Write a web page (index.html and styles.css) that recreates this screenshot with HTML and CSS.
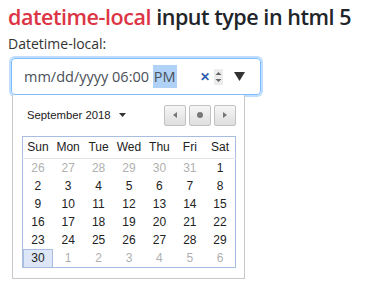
FILE: index.html
```html
<!DOCTYPE html>
<html lang="en">
<head>
    <meta charset="UTF-8">
    <title>datetime-local</title>
    <link rel="stylesheet" href="styles.css">
</head>
<body>

<h1><span class="red">datetime-local</span> input type in html 5</h1>

<label class="lbl">Datetime-local:</label>

<div class="field">
    <div class="input-box">
        <span class="value">mm/dd/yyyy 06:00 <span class="sel">PM</span></span>
        <span class="clear">&#x2715;</span>
        <span class="spin">
            <svg width="7" height="14" viewBox="0 0 7 14"><path d="M0.5 5 L3.5 2 L6.5 5 Z M0.5 9 L3.5 12 L6.5 9 Z" fill="#666"/></svg>
        </span>
        <span class="drop">
            <svg width="11" height="9" viewBox="0 0 11 9"><path d="M0 0 H11 L5.5 9 Z" fill="#333"/></svg>
        </span>
    </div>

    <div class="picker">
        <div class="picker-head">
            <span class="month">September 2018 <svg width="7" height="4" viewBox="0 0 7 4"><path d="M0 0 H7 L3.5 4 Z" fill="#333"/></svg></span>
            <div class="nav">
                <button><svg width="4" height="6" viewBox="0 0 4 6"><path d="M4 0 V6 L0 3 Z" fill="#777"/></svg></button>
                <button><svg width="6" height="6" viewBox="0 0 6 6"><circle cx="3" cy="3" r="3" fill="#777"/></svg></button>
                <button><svg width="4" height="6" viewBox="0 0 4 6"><path d="M0 0 V6 L4 3 Z" fill="#777"/></svg></button>
            </div>
        </div>

        <table class="cal">
            <thead>
                <tr><th>Sun</th><th>Mon</th><th>Tue</th><th>Wed</th><th>Thu</th><th>Fri</th><th>Sat</th></tr>
            </thead>
            <tbody>
                <tr><td class="off">26</td><td class="off">27</td><td class="off">28</td><td class="off">29</td><td class="off">30</td><td class="off">31</td><td>1</td></tr>
                <tr><td>2</td><td>3</td><td>4</td><td>5</td><td>6</td><td>7</td><td>8</td></tr>
                <tr><td>9</td><td>10</td><td>11</td><td>12</td><td>13</td><td>14</td><td>15</td></tr>
                <tr><td>16</td><td>17</td><td>18</td><td>19</td><td>20</td><td>21</td><td>22</td></tr>
                <tr><td>23</td><td>24</td><td>25</td><td>26</td><td>27</td><td>28</td><td>29</td></tr>
                <tr><td class="today">30</td><td class="off">1</td><td class="off">2</td><td class="off">3</td><td class="off">4</td><td class="off">5</td><td class="off">6</td></tr>
            </tbody>
        </table>
    </div>
</div>

</body>
</html>
```

FILE: styles.css
```css
body {
    margin: 0;
    padding: 0 8px;
    background-color: #fff;
    font-family: 'Open Sans', sans-serif;
    color: #212529;
}

h1 {
    margin: 0;
    padding-top: 2px;
    font-size: 21.5px;
    font-weight: 600;
    line-height: 30px;
    letter-spacing: -0.45px;
    white-space: nowrap;
}

.red {
    color: #dc3545;
}

.lbl {
    display: block;
    margin-top: 2px;
    font-size: 14px;
    line-height: 20px;
    color: #333;
}

.field {
    margin-top: 4px;
    margin-left: 3px;
    width: 250px;
}

.input-box {
    display: flex;
    align-items: center;
    height: 35px;
    border: 1px solid #80bdff;
    border-radius: 4px;
    box-shadow: 0 0 0 2px rgba(0, 123, 255, 0.25);
    padding: 0 15px 0 12px;
    font-size: 14.5px;
    color: #495057;
}

.value {
    flex: 1;
    white-space: nowrap;
}

.sel {
    background-color: #b0d2f7;
    padding: 2px 1px;
}

.clear {
    color: #2a5db0;
    font-size: 12px;
    font-weight: bold;
    margin-right: 4px;
}

.spin {
    display: flex;
    background-color: #ececec;
    padding: 1px 1px;
    margin-right: 11px;
}

.drop {
    display: flex;
}

.picker {
    margin-left: 1px;
    width: 233px;
    height: 184px;
    border: 1px solid #c8c8c8;
    border-top: none;
    background-color: #fff;
    padding: 9px 8px 0 9px;
    box-sizing: border-box;
    font-family: 'Liberation Sans', Arial, sans-serif;
    font-size: 12px;
    color: #222;
}

.picker-head {
    display: flex;
    align-items: center;
    justify-content: space-between;
    height: 22px;
    padding-left: 5px;
}

.month {
    display: flex;
    align-items: center;
    gap: 8px;
    font-size: 11.3px;
}

.nav {
    display: flex;
    gap: 3px;
}

.nav button {
    width: 22px;
    height: 21px;
    padding: 0;
    display: flex;
    align-items: center;
    justify-content: center;
    border: 1px solid #c2c2c2;
    border-radius: 2px;
    background: linear-gradient(#f6f6f6, #dedede);
}

.cal {
    margin-top: 10px;
    width: 214px;
    table-layout: fixed;
    border-collapse: collapse;
    border: 1px solid #a8bde0;
}

.cal th {
    font-weight: normal;
    height: 21px;
    line-height: 21px;
    padding: 0;
    text-align: center;
    border-bottom: 1px solid #e4e4e4;
    font-size: 12px;
}

.cal td {
    height: 18px;
    line-height: 18px;
    padding: 0;
    text-align: center;
    font-size: 12px;
}

.cal td.off {
    color: #b0b0b0;
}

.cal td.today {
    background-color: #dde6f7;
    outline: 1px solid #a8bde0;
    outline-offset: -1px;
}
```
